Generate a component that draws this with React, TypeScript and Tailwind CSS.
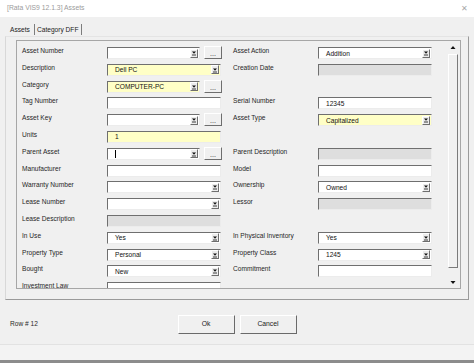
import React from 'react';

type Kind = 'combo' | 'comboBtn' | 'text' | 'disabled';
type Field = { label: string; kind: Kind; value?: string; yellow?: boolean; caret?: boolean } | null;

const rows: [Field, Field][] = [
  [{ label: 'Asset Number', kind: 'comboBtn' }, { label: 'Asset Action', kind: 'combo', value: 'Addition' }],
  [{ label: 'Description', kind: 'combo', value: 'Dell PC', yellow: true }, { label: 'Creation Date', kind: 'disabled' }],
  [{ label: 'Category', kind: 'comboBtn', value: 'COMPUTER-PC', yellow: true }, null],
  [{ label: 'Tag Number', kind: 'text' }, { label: 'Serial Number', kind: 'text', value: '12345' }],
  [{ label: 'Asset Key', kind: 'comboBtn' }, { label: 'Asset Type', kind: 'combo', value: 'Capitalized', yellow: true }],
  [{ label: 'Units', kind: 'text', value: '1', yellow: true }, null],
  [{ label: 'Parent Asset', kind: 'comboBtn', caret: true }, { label: 'Parent Description', kind: 'disabled' }],
  [{ label: 'Manufacturer', kind: 'text' }, { label: 'Model', kind: 'text' }],
  [{ label: 'Warranty Number', kind: 'combo' }, { label: 'Ownership', kind: 'combo', value: 'Owned' }],
  [{ label: 'Lease Number', kind: 'combo' }, { label: 'Lessor', kind: 'disabled' }],
  [{ label: 'Lease Description', kind: 'disabled' }, null],
  [{ label: 'In Use', kind: 'combo', value: 'Yes' }, { label: 'In Physical Inventory', kind: 'combo', value: 'Yes' }],
  [{ label: 'Property Type', kind: 'combo', value: 'Personal' }, { label: 'Property Class', kind: 'combo', value: '1245' }],
  [{ label: 'Bought', kind: 'combo', value: 'New' }, { label: 'Commitment', kind: 'text' }],
  [{ label: 'Investment Law', kind: 'text' }, null],
];

function DropArrow() {
  return (
    <div className="mr-[1px] flex h-[9px] w-[8px] shrink-0 items-center justify-center border border-t-white border-l-white border-b-[#6e6e6e] border-r-[#6e6e6e] bg-[#ececec]">
      <svg width="6" height="6" viewBox="0 0 6 6">
        <path d="M1 1.5h4L3 3.8z" fill="#111" />
        <path d="M1 5h4" stroke="#111" strokeWidth="0.8" />
      </svg>
    </div>
  );
}

function ArrowScroll({ up }: { up?: boolean }) {
  return (
    <div className="flex h-[9px] items-center justify-center">
      <svg width="6" height="5" viewBox="0 0 6 5">
        <path d={up ? 'M0.5 4h5L3 1z' : 'M0.5 1h5L3 4z'} fill="#111" />
      </svg>
    </div>
  );
}

function Input({ f }: { f: NonNullable<Field> }) {
  const bg = f.kind === 'disabled' ? 'bg-[#dedede]' : f.yellow ? 'bg-[#ffffc6]' : 'bg-white';
  const width = f.kind === 'comboBtn' ? 'w-[93px]' : 'w-[114px]';
  return (
    <div className="flex items-start gap-[4px]">
      <div
        className={`mt-[1px] flex h-[12px] items-center border border-t-[#6f6f6f] border-l-[#6f6f6f] border-b-[#ececec] border-r-[#ececec] ${bg} ${width}`}
      >
        <div className="flex flex-1 items-center pl-[7px] text-[6.6px] leading-[9px] text-[#111]">
          {f.caret && <span className="h-[8px] w-[1px] bg-black" />}
          {f.value}
        </div>
        {(f.kind === 'combo' || f.kind === 'comboBtn') && <DropArrow />}
      </div>
      {f.kind === 'comboBtn' && (
        <div className="flex h-[13px] w-[18px] items-end justify-center border border-t-white border-l-white border-b-[#6e6e6e] border-r-[#6e6e6e] bg-[#f0f0f0] pb-[1px] text-[7px] leading-[6px] text-[#222]">
          ...
        </div>
      )}
    </div>
  );
}

function Cell({ f, first }: { f: Field; first?: boolean }) {
  return (
    <div className={`flex ${first ? 'w-[202px]' : 'w-[199px]'}`}>
      <div className="w-[85px] shrink-0 text-[6.6px] leading-[9px] text-[#262626]">{f?.label}</div>
      {f && <Input f={f} />}
    </div>
  );
}

export default function App() {
  return (
    <div className="flex h-[363px] w-[474px] flex-col overflow-hidden bg-[#f0f0f0] font-['Liberation_Sans',Arial,sans-serif]">
      {/* Title bar */}
      <div className="flex h-[17px] shrink-0 items-center justify-between bg-white pl-[7px] pr-[6px]">
        <span className="text-[6.8px] text-[#9b9b9b]">[Rata VIS9 12.1.3] Assets</span>
        <span className="text-[8px] leading-none text-[#a8a8a8]">✕</span>
      </div>

      {/* Tabs */}
      <div className="flex h-[19px] shrink-0 items-start pl-[9px] pt-[7px] text-[6.6px] leading-[11px] text-[#222]">
        <div className="w-[25px] pl-[1px]">Assets</div>
        <div className="h-[11px] w-[1px] bg-[#7d7d7d]" />
        <div className="w-[46px] pl-[2px]">Category DFF</div>
        <div className="h-[11px] w-[1px] bg-[#7d7d7d]" />
      </div>

      {/* Tab page */}
      <div className="mx-[5px] h-[264px] shrink-0 border border-t-[#e4e4e4] border-l-[#d8d8d8] border-b-[#9a9a9a] border-r-[#9a9a9a] pl-[10px] pt-[3px]">
        <div className="flex h-[249px] w-[445px] overflow-hidden border border-[#a6a6a6]">
          <div className="flex-1 overflow-hidden pl-[5px] pt-[5px]">
            {rows.map(([l, r], i) => (
              <div key={i} className="flex h-[16.8px]">
                <Cell f={l} first />
                <div className="w-[9px]" />
                <Cell f={r} />
              </div>
            ))}
          </div>
          {/* Scrollbar */}
          <div className="flex w-[13px] shrink-0 flex-col pb-[1px] pr-[1px] pt-[2px]">
            <ArrowScroll up />
            <div className="mx-[1px] mt-[2px] flex-1 border border-t-white border-l-white border-b-[#7a7a7a] border-r-[#7a7a7a] bg-[#f0f0f0]" />
            <div className="h-[10px]" />
            <ArrowScroll />
          </div>
        </div>
      </div>

      {/* Footer */}
      <div className="relative flex h-[44px] shrink-0 items-start pt-[15px]">
        <span className="absolute left-[10px] top-[19px] text-[6.6px] leading-[10px] text-[#2a2a2a]">Row # 12</span>
        <div className="flex w-full justify-center gap-[5px]">
          <button className="h-[19px] w-[57px] border border-t-white border-l-white border-b-[#6a6a6a] border-r-[#6a6a6a] bg-[#f0f0f0] text-[6.8px] text-[#222]">
            Ok
          </button>
          <button className="h-[19px] w-[57px] border border-t-white border-l-white border-b-[#6a6a6a] border-r-[#6a6a6a] bg-[#f0f0f0] text-[6.8px] text-[#222]">
            Cancel
          </button>
        </div>
      </div>
      <div className="h-[16px] shrink-0 border-t border-[#e2e2e2] bg-[#f3f3f3]" />
      <div className="flex-1 bg-[#8c8c8c]" />
    </div>
  );
}
